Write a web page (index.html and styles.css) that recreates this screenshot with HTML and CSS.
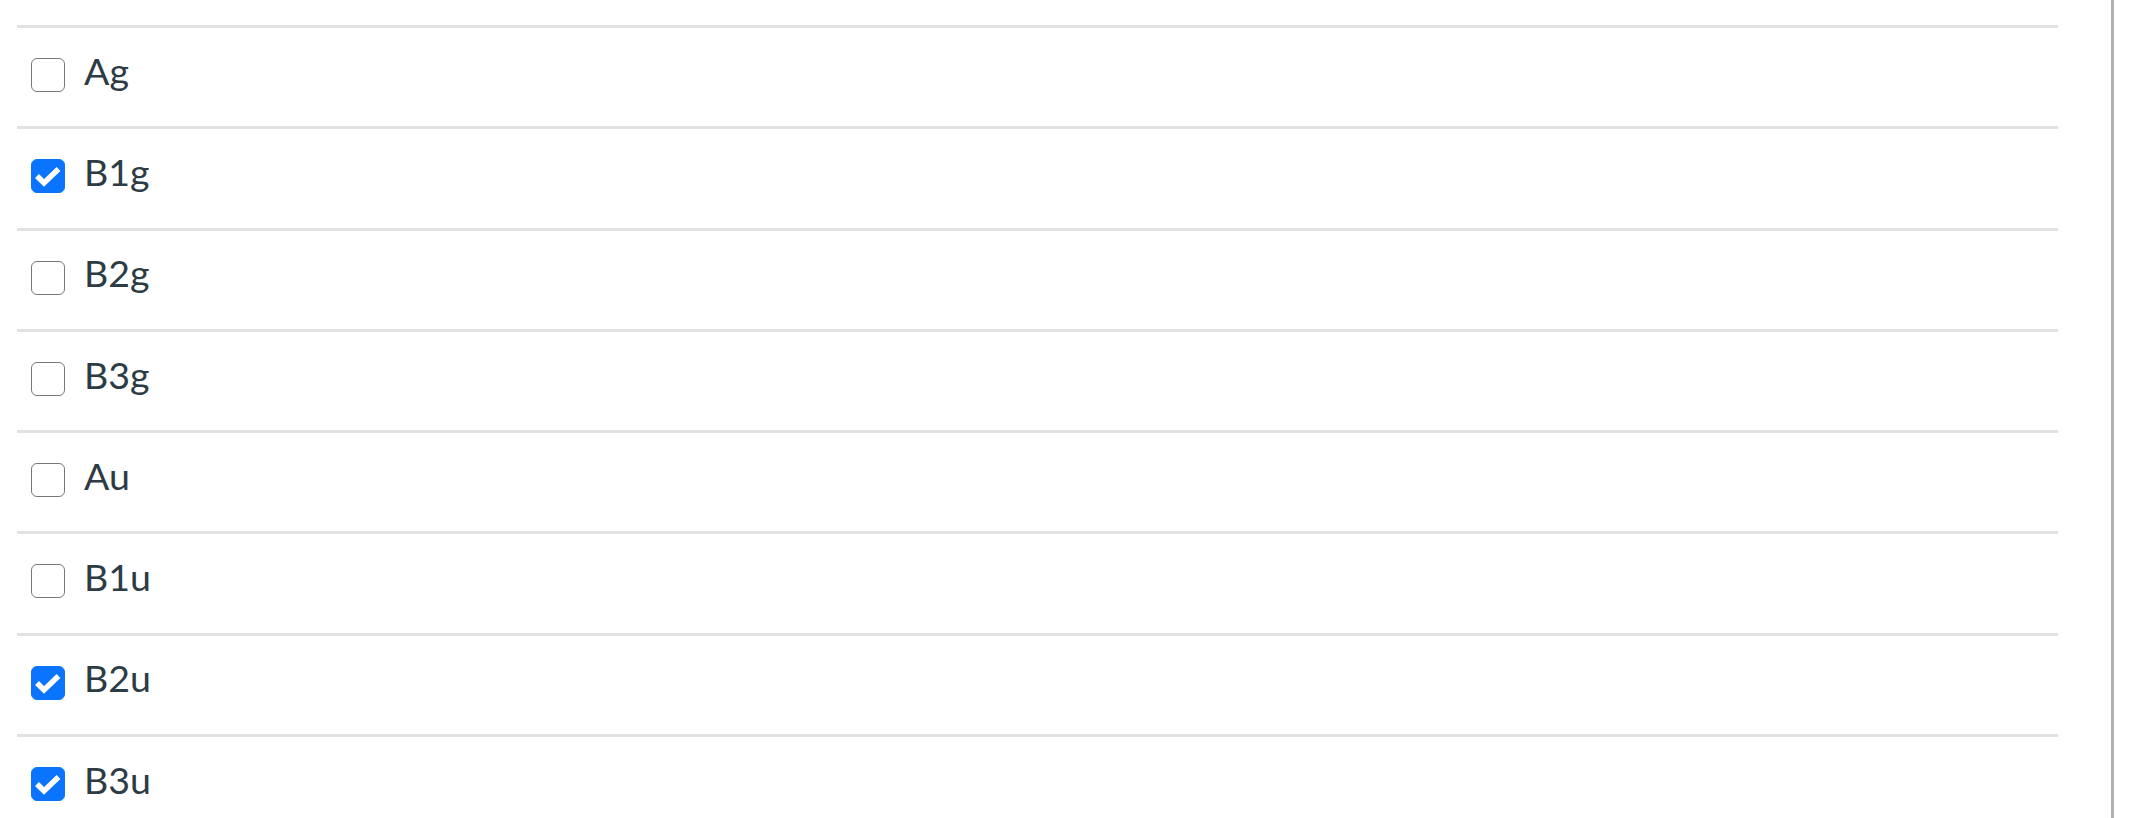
FILE: index.html
```html
<!DOCTYPE html>
<html>
<head>
<meta charset="utf-8">
<link rel="stylesheet" href="styles.css">
</head>
<body>
<div class="panel">
  <ul class="list">
    <li class="row"><span class="box"></span><span class="label">Ag</span></li>
    <li class="row"><span class="box checked"><svg viewBox="0 0 31 31"><path d="M5 16l7 7 14.5-14" /></svg></span><span class="label">B1g</span></li>
    <li class="row"><span class="box"></span><span class="label">B2g</span></li>
    <li class="row"><span class="box"></span><span class="label">B3g</span></li>
    <li class="row"><span class="box"></span><span class="label">Au</span></li>
    <li class="row"><span class="box"></span><span class="label">B1u</span></li>
    <li class="row"><span class="box checked"><svg viewBox="0 0 31 31"><path d="M5 16l7 7 14.5-14" /></svg></span><span class="label">B2u</span></li>
    <li class="row"><span class="box checked"><svg viewBox="0 0 31 31"><path d="M5 16l7 7 14.5-14" /></svg></span><span class="label">B3u</span></li>
  </ul>
</div>
</body>
</html>
```
FILE: styles.css
```css
html, body {
  margin: 0;
  padding: 0;
  background: #fff;
  overflow: hidden;
}
.panel {
  width: 2114px;
  height: 818px;
  box-sizing: border-box;
  border-right: 3px solid #b2b2b2;
  padding-top: 25px;
}
.list {
  list-style: none;
  margin: 0 0 0 17px;
  padding: 0;
  width: 2041px;
}
.row {
  display: flex;
  align-items: center;
  height: 101.25px;
  box-sizing: border-box;
  border-top: 3px solid #e2e2e2;
  padding-bottom: 4px;
  gap: 19px;
  padding-left: 14px;
  font-family: Lato, "Liberation Sans", sans-serif;
  font-size: 37.5px;
  color: #2d3b45;
}
.box {
  width: 34px;
  height: 34px;
  box-sizing: border-box;
  border: 1.5px solid #777;
  border-radius: 6px;
  background: #fff;
  flex: none;
  display: block;
}
.box.checked {
  background: #0b74ff;
  border-color: #0b74ff;
}
.box svg {
  display: block;
  width: 31px;
  height: 31px;
}
.box path {
  fill: none;
  stroke: #fff;
  stroke-width: 5.5;
  stroke-linecap: butt;
  stroke-linejoin: miter;
}
.label {
  line-height: 1;
  margin-top: -9px;
}
```
